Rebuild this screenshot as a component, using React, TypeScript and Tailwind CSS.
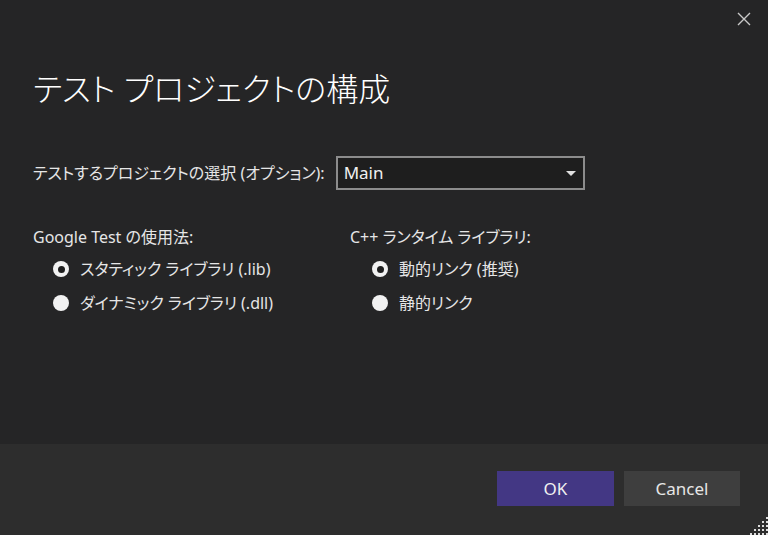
import React, { useState } from "react";

const FONT = "font-['Segoe_UI','Noto_Sans','Noto_Sans_CJK_JP',sans-serif] [font-feature-settings:'palt']";

const LEFT_OPTS = ["スタティック ライブラリ (.lib)", "ダイナミック ライブラリ (.dll)"];
const RIGHT_OPTS = ["動的リンク (推奨)", "静的リンク"];

function Radio({ checked, label, onClick }: { checked: boolean; label: string; onClick: () => void }) {
  return (
    <button onClick={onClick} className="flex items-center gap-[11px] h-[34px] text-left">
      <span className="w-[16px] h-[16px] rounded-full bg-[#f2f2f2] flex items-center justify-center shrink-0">
        {checked && <span className="w-[7px] h-[7px] rounded-full bg-[#1f1f1f]" />}
      </span>
      <span className="text-[16px] text-[#e6e6e6]">{label}</span>
    </button>
  );
}

function Grip() {
  const dots: [number, number][] = [];
  for (let r = 0; r < 5; r++) for (let c = 0; c <= r; c++) dots.push([19 - c * 4, 3 + r * 4]);
  return (
    <svg width="20" height="20" viewBox="0 0 20 20" className="absolute right-0 bottom-0">
      {dots.map(([x, y], i) => <rect key={i} x={x - 1} y={y - 1} width="2" height="2" fill="#dcdcdc" />)}
    </svg>
  );
}

export default function App() {
  const [lib, setLib] = useState(0);
  const [rt, setRt] = useState(0);

  return (
    <div className={`w-[768px] h-[535px] bg-[#252526] flex flex-col relative overflow-hidden ${FONT}`}>
      <div className="flex-1 flex flex-col px-[33px]">
        <div className="flex justify-end -mr-[17px] pt-[11px] h-[36px]">
          <button className="w-[16px] h-[16px] flex items-center justify-center">
            <svg width="14" height="14" viewBox="0 0 14 14" stroke="#c8c8c8" strokeWidth="1.4">
              <path d="M1 1 L13 13 M13 1 L1 13" />
            </svg>
          </button>
        </div>

        <h1 className="mt-[31px] text-[32px] leading-[44px] font-light text-white">テスト プロジェクトの構成</h1>

        <div className="mt-[45px] flex items-center gap-[11px]">
          <span className="text-[16px] text-[#e6e6e6]">テストするプロジェクトの選択 (オプション):</span>
          <div className="w-[249px] h-[34px] border-2 border-[#8c8c8c] bg-[#1e1e1e] flex items-center justify-between pl-[6px] pr-[7px]">
            <span className="text-[17px] text-[#f0f0f0]">Main</span>
            <svg width="10" height="5" viewBox="0 0 10 5"><path d="M0 0 H10 L5 5 Z" fill="#e0e0e0" /></svg>
          </div>
        </div>

        <div className="mt-[36px] grid grid-cols-[317px_1fr]">
          <div className="flex flex-col">
            <span className="text-[16px] text-[#e6e6e6] leading-[22px]">Google Test の使用法:</span>
            <div className="pl-[20px] mt-[4px] flex flex-col">
              {LEFT_OPTS.map((o, i) => <Radio key={o} label={o} checked={lib === i} onClick={() => setLib(i)} />)}
            </div>
          </div>
          <div className="flex flex-col">
            <span className="text-[16px] text-[#e6e6e6] leading-[22px]">C++ ランタイム ライブラリ:</span>
            <div className="pl-[22px] mt-[4px] flex flex-col">
              {RIGHT_OPTS.map((o, i) => <Radio key={o} label={o} checked={rt === i} onClick={() => setRt(i)} />)}
            </div>
          </div>
        </div>
      </div>

      <div className="h-[91px] bg-[#2d2d2d] flex items-center justify-end gap-[10px] pr-[28px] pb-[2px]">
        <button className="w-[117px] h-[35px] bg-[#433784] text-[17px] text-[#f0f0f0]">OK</button>
        <button className="w-[116px] h-[35px] bg-[#3e3e3e] text-[17px] text-[#e6e6e6]">Cancel</button>
      </div>
      <Grip />
    </div>
  );
}
